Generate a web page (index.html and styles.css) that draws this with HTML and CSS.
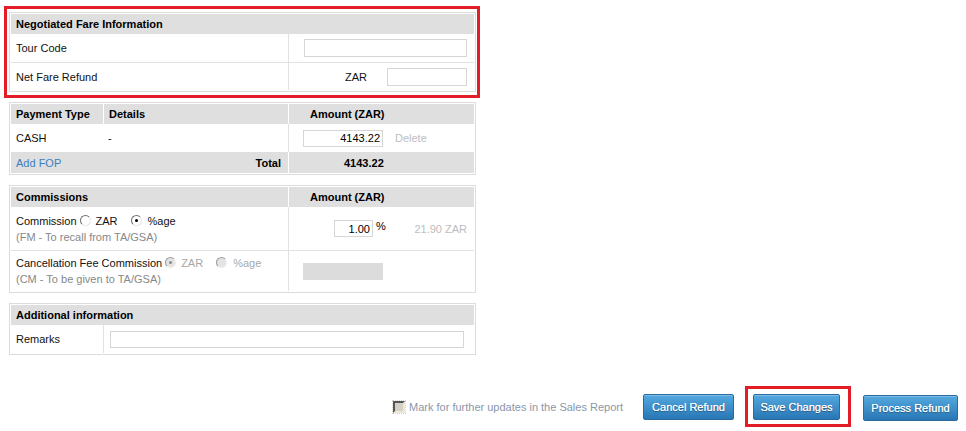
FILE: index.html
```html
<!DOCTYPE html>
<html>
<head>
<meta charset="utf-8">
<link rel="stylesheet" href="styles.css">
</head>
<body>
<div class="page">
  <div class="forms">
    <div class="highlight">
      <table class="grid">
        <colgroup><col class="w277"><col class="w186"></colgroup>
        <tr class="hd"><th colspan="2">Negotiated Fare Information</th></tr>
        <tr class="r28"><td>Tour Code</td><td class="div right"><input class="inp tour" type="text"></td></tr>
        <tr class="r28 line"><td>Net Fare Refund</td><td class="div right"><span class="cur">ZAR</span><input class="inp net" type="text"></td></tr>
      </table>
    </div>

    <table class="grid sp4">
      <colgroup><col class="w92"><col class="w185"><col class="w186"></colgroup>
      <tr class="hd"><th>Payment Type</th><th class="wsep">Details</th><th class="wsep amt">Amount (ZAR)</th></tr>
      <tr class="r28"><td>CASH</td><td>-</td><td class="div payamt"><input class="inp amount" type="text" value="4143.22"><span class="del">Delete</span></td></tr>
      <tr class="tot"><td><a class="link">Add FOP</a></td><td class="right b">Total</td><td class="wsep b totval">4143.22</td></tr>
    </table>

    <table class="grid sp10">
      <colgroup><col class="w277"><col class="w186"></colgroup>
      <tr class="hd"><th>Commissions</th><th class="wsep amt">Amount (ZAR)</th></tr>
      <tr class="r43">
        <td class="two">
          <div>Commission<span class="radio"></span>ZAR<span class="radio on second"></span>%age</div>
          <div class="note">(FM - To recall from TA/GSA)</div>
        </td>
        <td class="div">
          <div class="comm">
            <input class="inp pct" type="text" value="1.00"><span class="pc">%</span><span class="calc">21.90 ZAR</span>
          </div>
        </td>
      </tr>
      <tr class="r41 line">
        <td class="two">
          <div>Cancellation Fee Commission<span class="radio dis on"></span><span class="gr">ZAR</span><span class="radio dis second"></span><span class="gr">%age</span></div>
          <div class="note">(CM - To be given to TA/GSA)</div>
        </td>
        <td class="div"><div class="disbox"></div></td>
      </tr>
    </table>

    <table class="grid sp10">
      <colgroup><col class="w92"><col class="w371"></colgroup>
      <tr class="hd"><th colspan="2">Additional information</th></tr>
      <tr class="r28"><td>Remarks</td><td class="div"><input class="inp remarks" type="text"></td></tr>
    </table>
  </div>

  <div class="actions">
    <label class="check"><span class="box"></span>Mark for further updates in the Sales Report</label>
    <button class="btn cancel">Cancel Refund</button>
    <div class="hlbtn"><button class="btn save">Save Changes</button></div>
    <button class="btn process">Process Refund</button>
  </div>
</div>
</body>
</html>
```

FILE: styles.css
```css
html, body {
  margin: 0;
  padding: 0;
  background: #fff;
}
body {
  font-family: "Liberation Sans", Arial, sans-serif;
  font-size: 11px;
  color: #111;
}
.page {
  padding: 6px 0 0 4px;
}
.forms {
  width: 476px;
}
.highlight {
  border: 3px solid #e31d25;
  padding: 3px 1px 3px 2px;
  width: 476px;
  box-sizing: border-box;
}
.grid {
  box-sizing: border-box;
  width: 467px;
  border: 1px solid #dcdcdc;
  border-collapse: separate;
  border-spacing: 0;
  padding: 1px;
  table-layout: fixed;
}
.sp4 { margin: 4px 0 0 5px; }
.sp10 { margin: 10px 0 0 5px; }
.w277 { width: 277px; }
.w186 { width: 186px; }
.w92 { width: 92px; }
.w185 { width: 185px; }
.w371 { width: 371px; }

.grid th, .grid td {
  box-sizing: border-box;
  padding: 0 5px;
  vertical-align: middle;
  text-align: left;
}
.hd th {
  background: #dfdfdf;
  height: 20px;
  font-weight: bold;
  color: #000;
}
.wsep { border-left: 1px solid #fff; }
.amt { padding-left: 21px !important; }
.r28 td { height: 28px; }
.r43 td { height: 43px; }
.r41 td { height: 41px; }
.line td { border-top: 1px solid #e2e2e2; }
.div { border-left: 1px solid #e2e2e2; }
.right { text-align: right !important; }
.b { font-weight: bold; color: #000; }

.tot td {
  background: #dfdfdf;
  height: 21px;
}
.totval { padding-left: 55px !important; }
.link { color: #3a80c0; }

.inp {
  box-sizing: border-box;
  height: 17px;
  border: 1px solid #d6d6d6;
  background: #fff;
  font-family: "Liberation Sans", Arial, sans-serif;
  font-size: 11px;
  color: #000;
  padding: 0 2px;
  margin: 0;
  vertical-align: middle;
  outline: none;
}
.right { padding-right: 7px !important; }
.tour { width: 163px; height: 18px; }
.net { width: 80px; height: 18px; margin-left: 20px; }
.cur { vertical-align: middle; }
.payamt { padding-left: 14px !important; }
.amount { width: 80px; text-align: right; }
.del { color: #bdbdbd; margin-left: 12px; vertical-align: middle; }

.two { line-height: 16px; }
.note { color: #888; }
.radio {
  display: inline-block;
  box-sizing: border-box;
  width: 11px;
  height: 11px;
  border-radius: 50%;
  border: 1px solid;
  border-color: #6f6f6f #e6e6e6 #e6e6e6 #6f6f6f;
  background: #fff;
  vertical-align: -1px;
  margin: 0 5px 0 3px;
  position: relative;
}
.radio.second { margin-left: 13px; margin-right: 6px; }
.radio.on::after {
  content: "";
  position: absolute;
  left: 3px;
  top: 3px;
  width: 3px;
  height: 3px;
  border-radius: 50%;
  background: #000;
}
.radio.dis { background: #e4e4e4; border-color: #9a9a9a #eee #eee #9a9a9a; }
.radio.dis.on::after { background: #8a8a8a; }
.gr { color: #a8a8a8; }

.comm {
  display: flex;
  align-items: center;
  padding-left: 40px;
}
.pct { width: 39px; text-align: right; }
.pc { margin-left: 3px; margin-top: -6px; color: #000; }
.calc { margin-left: auto; color: #bdbdbd; padding-right: 2px; }
.disbox {
  width: 80px;
  height: 17px;
  background: #dcdcdc;
  margin-left: 9px;
}
.remarks { width: 354px; margin-left: 1px; }

.actions {
  display: flex;
  justify-content: flex-end;
  align-items: center;
  margin-top: 31px;
  padding-right: 8px;
}
.check {
  display: flex;
  align-items: center;
  color: #8a97aa;
  margin-right: 20px;
}
.box {
  box-sizing: border-box;
  width: 12px;
  height: 12px;
  border: 2px solid;
  border-color: #555 #ece9d8 #ece9d8 #555;
  background: #d4d0c8;
  margin-right: 4px;
  outline: 1px dotted #d8d0c0;
}
.btn {
  box-sizing: border-box;
  height: 26px;
  border: 1px solid #2a6aa0;
  border-radius: 2px;
  background: linear-gradient(#55a8df, #2877b5);
  box-shadow: inset 0 1px 0 rgba(255,255,255,0.25);
  color: #fff;
  font-family: "Liberation Sans", Arial, sans-serif;
  font-size: 11px;
  text-shadow: 0 1px 1px rgba(0,0,0,0.35), 0 0 0.4px #fff;
  padding: 0;
  cursor: pointer;
}
.cancel { width: 91px; }
.save { width: 87px; }
.process { width: 95px; margin-top: 2px; }
.hlbtn {
  border: 3px solid #e31d25;
  padding: 5px 8px 4px 5px;
  margin: 0 12px 0 11px;
  display: flex;
}
```
